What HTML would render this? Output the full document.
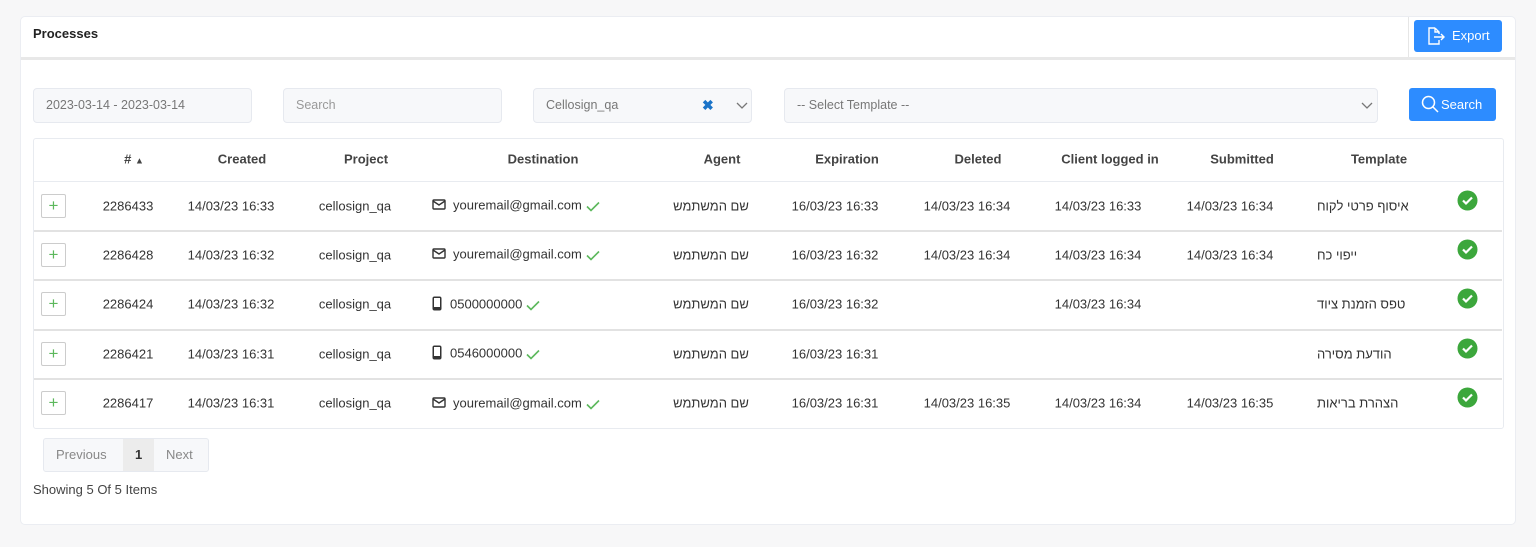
<!DOCTYPE html><html><head><meta charset="utf-8"><style>
*{box-sizing:border-box;margin:0;padding:0}
body{width:1536px;height:547px;background:#f7f7f8;font-family:"Liberation Sans","Noto Sans CJK JP",sans-serif;color:#333;font-size:13px;position:relative;overflow:hidden}
.a{position:absolute}
.card{left:20px;top:16px;width:1496px;height:509px;background:#fff;border:1px solid #ebedf2;border-radius:5px}
.c{position:absolute;transform:translate(-50%,-50%);white-space:nowrap}
.inp{position:absolute;top:88px;height:35px;background:#f7f8fa;border:1px solid #e6e9ef;border-radius:4px;color:#999;font-size:12.5px;padding:9px 12px}
.btn{position:absolute;background:#2d8cff;color:#fff;border-radius:3px;font-size:13px}
.h{font-weight:bold;color:#444}
.plus{position:absolute;left:41px;width:25px;height:24px;border:1px solid #ccc;border-radius:2px;color:#5cb85c;font-size:17px;text-align:center;line-height:21px;background:#fff}
.rl{position:absolute;left:34px;width:1468px;height:2px;background:#e2e2e2}
.d{position:absolute;white-space:nowrap;transform:translateY(-50%)}
.d svg.k{margin-left:4px;vertical-align:middle}
.t{position:absolute;left:1317px;white-space:nowrap;transform:translateY(-50%)}
</style></head><body>
<div class="a card"></div>
<div class="a h" style="left:33px;top:26px;font-size:13px;color:#222">Processes</div>
<div class="a" style="left:1408px;top:17px;width:1px;height:41px;background:#e6e6e6"></div>
<div class="a" style="left:21px;top:57px;width:1494px;height:3px;background:#e8e8e8"></div>
<div class="btn" style="left:1414px;top:20px;width:88px;height:32px"><svg class="a" style="left:12px;top:7px" width="20" height="18" viewBox="0 0 20 18" fill="none" stroke="#fff" stroke-width="1.4"><path d="M9 1H3v16h10v-4M9 1l4 4v2M9 1v4h4M8 10h10M15 7l3 3-3 3"/></svg><span class="a" style="left:38px;top:8px">Export</span></div>

<div class="inp" style="left:33px;width:219px;color:#777">2023-03-14 - 2023-03-14</div>
<div class="inp" style="left:283px;width:219px">Search</div>
<div class="inp" style="left:533px;width:219px;color:#777">Cellosign_qa<span class="a" style="left:168px;top:8px;color:#1a73c8;font-size:14px;font-weight:bold">✖</span><svg class="a" style="left:202px;top:13px" width="12" height="8" viewBox="0 0 12 8" fill="none" stroke="#777" stroke-width="1.3"><path d="M1 1l5 5 5-5"/></svg></div>
<div class="inp" style="left:784px;width:594px;color:#777">-- Select Template --<svg class="a" style="left:576px;top:13px" width="12" height="8" viewBox="0 0 12 8" fill="none" stroke="#777" stroke-width="1.3"><path d="M1 1l5 5 5-5"/></svg></div>
<div class="btn" style="left:1409px;top:88px;width:87px;height:33px"><svg class="a" style="left:12px;top:7px" width="18" height="18" viewBox="0 0 18 18" fill="none" stroke="#fff" stroke-width="1.5"><circle cx="7.5" cy="7.5" r="6"/><path d="M12 12l5 5"/></svg><span class="a" style="left:32px;top:9px">Search</span></div>

<div class="a" style="left:33px;top:138px;width:1471px;height:291px;border:1px solid #e8ebf0;border-radius:3px"></div>
<div class="a" style="left:34px;top:181px;width:1469px;height:1px;background:#e8ebf0"></div>
<div class="rl" style="top:230px"></div><div class="rl" style="top:279px"></div><div class="rl" style="top:329px"></div><div class="rl" style="top:378px"></div>

<div class="c h" style="left:134px;top:159px"># <span style="font-size:9px">▲</span></div>
<div class="c h" style="left:242px;top:159px">Created</div>
<div class="c h" style="left:366px;top:159px">Project</div>
<div class="c h" style="left:543px;top:159px">Destination</div>
<div class="c h" style="left:722px;top:159px">Agent</div>
<div class="c h" style="left:847px;top:159px">Expiration</div>
<div class="c h" style="left:978px;top:159px">Deleted</div>
<div class="c h" style="left:1110px;top:159px">Client logged in</div>
<div class="c h" style="left:1242px;top:159px">Submitted</div>
<div class="c h" style="left:1379px;top:159px">Template</div>

<div class="plus" style="top:194px">+</div><div class="c" style="left:128px;top:206px">2286433</div><div class="c" style="left:231px;top:206px">14/03/23 16:33</div><div class="c" style="left:355px;top:206px">cellosign_qa</div>
<div class="plus" style="top:243px">+</div><div class="c" style="left:128px;top:255px">2286428</div><div class="c" style="left:231px;top:255px">14/03/23 16:32</div><div class="c" style="left:355px;top:255px">cellosign_qa</div>
<div class="plus" style="top:292px">+</div><div class="c" style="left:128px;top:304px">2286424</div><div class="c" style="left:231px;top:304px">14/03/23 16:32</div><div class="c" style="left:355px;top:304px">cellosign_qa</div>
<div class="plus" style="top:342px">+</div><div class="c" style="left:128px;top:354px">2286421</div><div class="c" style="left:231px;top:354px">14/03/23 16:31</div><div class="c" style="left:355px;top:354px">cellosign_qa</div>
<div class="plus" style="top:391px">+</div><div class="c" style="left:128px;top:403px">2286417</div><div class="c" style="left:231px;top:403px">14/03/23 16:31</div><div class="c" style="left:355px;top:403px">cellosign_qa</div>

<svg class="a" style="left:432px;top:199px" width="14" height="11" viewBox="0 0 14 11" fill="none" stroke="#333" stroke-width="1.4"><rect x="1" y="1" width="12" height="9" rx="1"/><path d="M1 2l6 4 6-4"/></svg><div class="d" style="left:453px;top:205px">youremail@gmail.com<svg class="k" width="14" height="10" viewBox="0 0 14 10" fill="none" stroke="#5cb85c" stroke-width="1.6"><path d="M1 5l4 4 8-8"/></svg></div>
<svg class="a" style="left:432px;top:248px" width="14" height="11" viewBox="0 0 14 11" fill="none" stroke="#333" stroke-width="1.4"><rect x="1" y="1" width="12" height="9" rx="1"/><path d="M1 2l6 4 6-4"/></svg><div class="d" style="left:453px;top:254px">youremail@gmail.com<svg class="k" width="14" height="10" viewBox="0 0 14 10" fill="none" stroke="#5cb85c" stroke-width="1.6"><path d="M1 5l4 4 8-8"/></svg></div>
<svg class="a" style="left:432px;top:296px" width="10" height="15" viewBox="0 0 10 15"><rect x="0.5" y="0.5" width="9" height="14" rx="2" fill="#333"/><rect x="2" y="2" width="6" height="9" fill="#fff"/></svg><div class="d" style="left:450px;top:304px">0500000000<svg class="k" width="14" height="10" viewBox="0 0 14 10" fill="none" stroke="#5cb85c" stroke-width="1.6"><path d="M1 5l4 4 8-8"/></svg></div>
<svg class="a" style="left:432px;top:345px" width="10" height="15" viewBox="0 0 10 15"><rect x="0.5" y="0.5" width="9" height="14" rx="2" fill="#333"/><rect x="2" y="2" width="6" height="9" fill="#fff"/></svg><div class="d" style="left:450px;top:353px">0546000000<svg class="k" width="14" height="10" viewBox="0 0 14 10" fill="none" stroke="#5cb85c" stroke-width="1.6"><path d="M1 5l4 4 8-8"/></svg></div>
<svg class="a" style="left:432px;top:397px" width="14" height="11" viewBox="0 0 14 11" fill="none" stroke="#333" stroke-width="1.4"><rect x="1" y="1" width="12" height="9" rx="1"/><path d="M1 2l6 4 6-4"/></svg><div class="d" style="left:453px;top:403px">youremail@gmail.com<svg class="k" width="14" height="10" viewBox="0 0 14 10" fill="none" stroke="#5cb85c" stroke-width="1.6"><path d="M1 5l4 4 8-8"/></svg></div>

<div class="c" style="left:711px;top:206px">שם המשתמש</div><div class="c" style="left:711px;top:255px">שם המשתמש</div><div class="c" style="left:711px;top:304px">שם המשתמש</div><div class="c" style="left:711px;top:354px">שם המשתמש</div><div class="c" style="left:711px;top:403px">שם המשתמש</div>
<div class="c" style="left:835px;top:206px">16/03/23 16:33</div><div class="c" style="left:835px;top:255px">16/03/23 16:32</div><div class="c" style="left:835px;top:304px">16/03/23 16:32</div><div class="c" style="left:835px;top:354px">16/03/23 16:31</div><div class="c" style="left:835px;top:403px">16/03/23 16:31</div>
<div class="c" style="left:967px;top:206px">14/03/23 16:34</div><div class="c" style="left:967px;top:255px">14/03/23 16:34</div><div class="c" style="left:967px;top:403px">14/03/23 16:35</div>
<div class="c" style="left:1098px;top:206px">14/03/23 16:33</div><div class="c" style="left:1098px;top:255px">14/03/23 16:34</div><div class="c" style="left:1098px;top:304px">14/03/23 16:34</div><div class="c" style="left:1098px;top:403px">14/03/23 16:34</div>
<div class="c" style="left:1230px;top:206px">14/03/23 16:34</div><div class="c" style="left:1230px;top:255px">14/03/23 16:34</div><div class="c" style="left:1230px;top:403px">14/03/23 16:35</div>
<div class="t" style="top:206px">איסוף פרטי לקוח</div>
<div class="t" style="top:255px">ייפוי כח</div>
<div class="t" style="top:304px">טפס הזמנת ציוד</div>
<div class="t" style="top:354px">הודעת מסירה</div>
<div class="t" style="top:403px">הצהרת בריאות</div>
<svg class="a" style="left:1457px;top:190px" width="21" height="21" viewBox="0 0 21 21"><circle cx="10.5" cy="10.5" r="10" fill="#3ca73c"/><path d="M6 10.5l3 3 6-6" fill="none" stroke="#fff" stroke-width="2.2"/></svg>
<svg class="a" style="left:1457px;top:239px" width="21" height="21" viewBox="0 0 21 21"><circle cx="10.5" cy="10.5" r="10" fill="#3ca73c"/><path d="M6 10.5l3 3 6-6" fill="none" stroke="#fff" stroke-width="2.2"/></svg>
<svg class="a" style="left:1457px;top:288px" width="21" height="21" viewBox="0 0 21 21"><circle cx="10.5" cy="10.5" r="10" fill="#3ca73c"/><path d="M6 10.5l3 3 6-6" fill="none" stroke="#fff" stroke-width="2.2"/></svg>
<svg class="a" style="left:1457px;top:338px" width="21" height="21" viewBox="0 0 21 21"><circle cx="10.5" cy="10.5" r="10" fill="#3ca73c"/><path d="M6 10.5l3 3 6-6" fill="none" stroke="#fff" stroke-width="2.2"/></svg>
<svg class="a" style="left:1457px;top:387px" width="21" height="21" viewBox="0 0 21 21"><circle cx="10.5" cy="10.5" r="10" fill="#3ca73c"/><path d="M6 10.5l3 3 6-6" fill="none" stroke="#fff" stroke-width="2.2"/></svg>

<div class="a" style="left:43px;top:438px;width:166px;height:34px;background:#f7f8fa;border:1px solid #e6e9ef;border-radius:3px"></div>
<div class="a" style="left:123px;top:439px;width:31px;height:32px;background:#ececec"></div>
<div class="a" style="left:56px;top:447px;color:#888">Previous</div>
<div class="a" style="left:135px;top:447px;color:#333;font-weight:bold">1</div>
<div class="a" style="left:166px;top:447px;color:#888">Next</div>
<div class="a" style="left:33px;top:482px;color:#444">Showing 5 Of 5 Items</div>
</body></html>
